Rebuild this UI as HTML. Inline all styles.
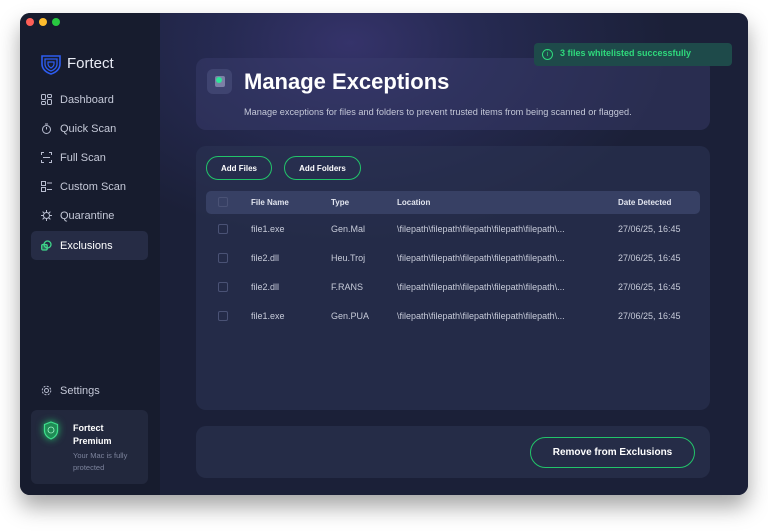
<!DOCTYPE html>
<html><head><meta charset="utf-8"><style>
*{margin:0;padding:0;box-sizing:border-box}
body{width:768px;height:532px;background:#fff;font-family:"Liberation Sans",sans-serif;position:relative;overflow:hidden}
.win{position:absolute;left:20px;top:13px;width:728px;height:482px;border-radius:10px;overflow:hidden;background:#181d31;box-shadow:0 12px 22px rgba(0,0,0,.35)}
.side{position:absolute;left:0;top:0;width:140px;height:100%;background:#171c2e}
.main{position:absolute;left:140px;top:0;right:0;bottom:0;background:radial-gradient(ellipse 320px 200px at 190px 30px,#35336a 0%,#262a52 40%,#1b2038 100%)}
.dot{position:absolute;top:5px;width:8px;height:8px;border-radius:50%}
.nav{position:absolute;left:11px;width:117px;height:29px;border-radius:5px;color:#c5c9d8;font-size:11px;display:flex;align-items:center;padding-left:10px}
.nav svg{margin-right:8px}
.nav.act{background:#262c45;color:#fff}
.card{position:absolute;background:rgba(44,52,84,.6);border-radius:10px}
.abs{position:absolute;white-space:nowrap}
.btn{position:absolute;border:1.5px solid #22c46a;border-radius:14px;color:#fff;font-weight:bold;font-size:8px;display:flex;align-items:center;justify-content:center}
.cb{position:absolute;width:10px;height:10px;border:1px solid #4a5275;border-radius:2px}
.row{position:absolute;left:0;width:100%;font-size:9px;color:#c7cbd9}
</style></head><body>
<div class="win">
<div class="side">
<div class="dot" style="left:6px;background:#fe5f57"></div>
<div class="dot" style="left:19px;background:#febc2e"></div>
<div class="dot" style="left:32px;background:#28c840"></div>
<svg class="abs" style="left:21px;top:41px" width="20" height="21" viewBox="0 0 20 21"><path d="M1 2h18v8c0 5-4 8.5-9 10C5 18.5 1 15 1 10z" fill="none" stroke="#2d5cf0" stroke-width="1.6"/><path d="M4 5h12v5c0 3.5-3 6-6 7-3-1-6-3.5-6-7z" fill="none" stroke="#2d5cf0" stroke-width="1.3"/><path d="M7 8h6v2c0 2-1.5 3-3 4-1.5-1-3-2-3-4z" fill="none" stroke="#2d5cf0" stroke-width="1.2"/></svg>
<div class="abs" style="left:47px;top:42px;color:#e8ebf4;font-size:15px">Fortect</div>
<div class="nav" style="top:72px"><svg width="11" height="11" viewBox="0 0 11 11" fill="none" stroke="#b8bdd0"><rect x=".5" y=".5" width="4" height="5" rx="1"/><rect x="6.5" y=".5" width="4" height="3" rx="1"/><rect x=".5" y="7.5" width="4" height="3" rx="1"/><rect x="6.5" y="5.5" width="4" height="5" rx="1"/></svg>Dashboard</div>
<div class="nav" style="top:101px"><svg width="11" height="11" viewBox="0 0 11 11" fill="none" stroke="#b8bdd0"><circle cx="5.5" cy="6.5" r="4"/><path d="M4 1h3M5.5 4v2.5"/></svg>Quick Scan</div>
<div class="nav" style="top:130px"><svg width="11" height="11" viewBox="0 0 11 11" fill="none" stroke="#b8bdd0"><path d="M.5 3V.5H3M8 .5h2.5V3M.5 8v2.5H3M8 10.5h2.5V8M2 5.5h7"/></svg>Full Scan</div>
<div class="nav" style="top:159px"><svg width="11" height="11" viewBox="0 0 11 11" fill="none" stroke="#b8bdd0"><rect x=".5" y=".5" width="4" height="4"/><rect x=".5" y="6.5" width="4" height="4"/><path d="M6 2h5M6 8.5h5"/></svg>Custom Scan</div>
<div class="nav" style="top:188px"><svg width="11" height="11" viewBox="0 0 11 11" fill="none" stroke="#b8bdd0"><circle cx="5.5" cy="5.5" r="3"/><path d="M5.5 0v2.5M5.5 8.5V11M0 5.5h2.5M8.5 5.5H11M1.6 1.6l1.8 1.8M7.6 7.6l1.8 1.8M1.6 9.4l1.8-1.8M7.6 3.4l1.8-1.8"/></svg>Quarantine</div>
<div class="nav act" style="top:218px"><svg width="11" height="11" viewBox="0 0 11 11" fill="none" stroke="#3fd68a" stroke-width="1.3"><circle cx="6.5" cy="4.5" r="3.5"/><rect x=".7" y="4.5" width="5.5" height="5.5" rx="1.2" fill="#3fd68a" fill-opacity=".35"/></svg>Exclusions</div>
<div class="nav" style="top:363px"><svg width="11" height="11" viewBox="0 0 11 11" fill="none" stroke="#b8bdd0"><circle cx="5.5" cy="5.5" r="2"/><circle cx="5.5" cy="5.5" r="4.3" stroke-dasharray="2 1.4"/></svg>Settings</div>
<div class="abs" style="left:11px;top:397px;width:117px;height:74px;background:#22283d;border-radius:6px"></div>
<svg class="abs" style="left:23px;top:408px;filter:drop-shadow(0 0 4px #22c46a)" width="16" height="19" viewBox="0 0 16 19"><path d="M8 1l6.5 2.5v6c0 4-3 7-6.5 8.5C4.5 16.5 1.5 13.5 1.5 9.5v-6z" fill="#1f8c55" stroke="#3fe08e" stroke-width="1.2"/><circle cx="8" cy="9" r="3" fill="none" stroke="#9ff5c8" stroke-width=".8"/></svg>
<div class="abs" style="left:53px;top:409px;color:#fff;font-size:9px;font-weight:bold;line-height:13px">Fortect<br>Premium</div>
<div class="abs" style="left:53px;top:437px;color:#7c839c;font-size:7.5px;line-height:12px">Your Mac is fully<br>protected</div>
</div>
<div class="main">
<div class="card" style="left:36px;top:45px;width:514px;height:72px;background:rgba(60,62,110,.45)"></div>
<div class="abs" style="left:47px;top:56px;width:25px;height:25px;border-radius:6px;background:#3f4470"></div>
<div class="abs" style="left:55px;top:63px;width:10px;height:11px;border-radius:2px;background:#7c80a6"></div>
<div class="abs" style="left:56px;top:64px;width:6px;height:6px;border-radius:50%;background:#2ee598"></div>
<div class="abs" style="left:84px;top:56px;color:#fff;font-size:22px;font-weight:bold">Manage Exceptions</div>
<div class="abs" style="left:84px;top:94px;color:#c4c8d8;font-size:9.2px">Manage exceptions for files and folders to prevent trusted items from being scanned or flagged.</div>
<div class="abs" style="left:374px;top:30px;width:198px;height:23px;border-radius:4px;background:#1e4a4a"></div>
<div class="abs" style="left:382px;top:36px;width:11px;height:11px;border:1px solid #2fd97c;border-radius:50%;color:#2fd97c;font-size:7px;text-align:center;line-height:9px">i</div>
<div class="abs" style="left:400px;top:35px;color:#2fd97c;font-size:9px;font-weight:bold">3 files whitelisted successfully</div>
<div class="card" style="left:36px;top:133px;width:514px;height:264px"></div>
<div class="btn" style="left:46px;top:143px;width:66px;height:24px">Add Files</div>
<div class="btn" style="left:124px;top:143px;width:77px;height:24px">Add Folders</div>
<div class="abs" style="left:46px;top:178px;width:494px;height:23px;border-radius:5px;background:#374064"></div>
<div class="row" style="top:178px;height:23px;line-height:23px;color:#e2e5ef;font-weight:bold;font-size:8px">
<div class="cb" style="left:58px;top:6px"></div><span class="abs" style="left:91px">File Name</span><span class="abs" style="left:171px">Type</span><span class="abs" style="left:237px">Location</span><span class="abs" style="left:458px">Date Detected</span></div>
<div class="row" style="top:206px;height:20px;line-height:20px"><div class="cb" style="left:58px;top:5px"></div><span class="abs" style="left:91px">file1.exe</span><span class="abs" style="left:171px">Gen.Mal</span><span class="abs" style="left:237px">\filepath\filepath\filepath\filepath\filepath\...</span><span class="abs" style="left:458px">27/06/25, 16:45</span></div>
<div class="row" style="top:235px;height:20px;line-height:20px"><div class="cb" style="left:58px;top:5px"></div><span class="abs" style="left:91px">file2.dll</span><span class="abs" style="left:171px">Heu.Troj</span><span class="abs" style="left:237px">\filepath\filepath\filepath\filepath\filepath\...</span><span class="abs" style="left:458px">27/06/25, 16:45</span></div>
<div class="row" style="top:264px;height:20px;line-height:20px"><div class="cb" style="left:58px;top:5px"></div><span class="abs" style="left:91px">file2.dll</span><span class="abs" style="left:171px">F.RANS</span><span class="abs" style="left:237px">\filepath\filepath\filepath\filepath\filepath\...</span><span class="abs" style="left:458px">27/06/25, 16:45</span></div>
<div class="row" style="top:293px;height:20px;line-height:20px"><div class="cb" style="left:58px;top:5px"></div><span class="abs" style="left:91px">file1.exe</span><span class="abs" style="left:171px">Gen.PUA</span><span class="abs" style="left:237px">\filepath\filepath\filepath\filepath\filepath\...</span><span class="abs" style="left:458px">27/06/25, 16:45</span></div>
<div class="card" style="left:36px;top:413px;width:514px;height:52px;background:#252c47"></div>
<div class="btn" style="left:370px;top:424px;width:165px;height:31px;border-radius:16px;font-size:10px">Remove from Exclusions</div>
</div>
</div>
</body></html>
